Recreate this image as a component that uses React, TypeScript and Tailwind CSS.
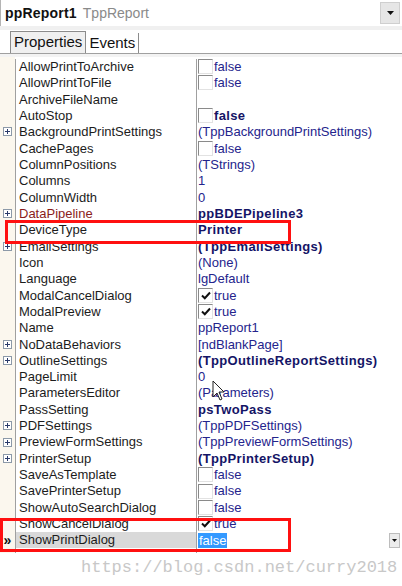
import React from "react"

type Row = {
  name: string
  value?: string
  check?: boolean
  bold?: boolean
  expand?: boolean
  red?: boolean
}

const rows: Row[] = [
  { name: "AllowPrintToArchive", value: "false", check: false },
  { name: "AllowPrintToFile", value: "false", check: false },
  { name: "ArchiveFileName", value: "" },
  { name: "AutoStop", value: "false", check: false, bold: true },
  { name: "BackgroundPrintSettings", value: "(TppBackgroundPrintSettings)", expand: true },
  { name: "CachePages", value: "false", check: false },
  { name: "ColumnPositions", value: "(TStrings)" },
  { name: "Columns", value: "1" },
  { name: "ColumnWidth", value: "0" },
  { name: "DataPipeline", value: "ppBDEPipeline3", bold: true, expand: true, red: true },
  { name: "DeviceType", value: "Printer", bold: true },
  { name: "EmailSettings", value: "(TppEmailSettings)", bold: true, expand: true },
  { name: "Icon", value: "(None)" },
  { name: "Language", value: "lgDefault" },
  { name: "ModalCancelDialog", value: "true", check: true },
  { name: "ModalPreview", value: "true", check: true },
  { name: "Name", value: "ppReport1" },
  { name: "NoDataBehaviors", value: "[ndBlankPage]", expand: true },
  { name: "OutlineSettings", value: "(TppOutlineReportSettings)", bold: true, expand: true },
  { name: "PageLimit", value: "0" },
  { name: "ParametersEditor", value: "(Parameters)" },
  { name: "PassSetting", value: "psTwoPass", bold: true },
  { name: "PDFSettings", value: "(TppPDFSettings)", expand: true },
  { name: "PreviewFormSettings", value: "(TppPreviewFormSettings)", expand: true },
  { name: "PrinterSetup", value: "(TppPrinterSetup)", bold: true, expand: true },
  { name: "SaveAsTemplate", value: "false", check: false },
  { name: "SavePrinterSetup", value: "false", check: false },
  { name: "ShowAutoSearchDialog", value: "false", check: false },
  { name: "ShowCancelDialog", value: "true", check: true },
]

const font = { fontFamily: "Tahoma, 'Liberation Sans', sans-serif" }

function CheckBox({ checked }: { checked: boolean }) {
  return (
    <span className="mr-[1px] inline-flex h-[15px] w-[15px] shrink-0 items-center justify-center border-t border-l border-b border-r border-t-[#8a8a8a] border-l-[#8a8a8a] border-b-[#e2e2e2] border-r-[#e2e2e2] bg-white">
      {checked ? (
        <svg width="10" height="9" viewBox="0 0 10 9">
          <path d="M1 4.5 L3.8 7.2 L9 1.5" fill="none" stroke="#111" strokeWidth="2" />
        </svg>
      ) : null}
    </span>
  )
}

function Expander() {
  return (
    <span className="flex h-[9px] w-[9px] items-center justify-center border border-[#8c99a8] bg-white">
      <svg width="7" height="7" viewBox="0 0 7 7">
        <path d="M1 3.5 H6 M3.5 1 V6" stroke="#2a3a6a" strokeWidth="1" />
      </svg>
    </span>
  )
}

function PropRow({ row }: { row: Row }) {
  return (
    <div className="flex h-[16.33px] items-center">
      <div className="flex h-full w-[15px] items-center justify-center">{row.expand ? <Expander /> : null}</div>
      <div
        className={`flex h-full w-[181px] items-center border-l border-[#a0a0a0] pl-[3px] text-[13px] ${
          row.red ? "text-[#8a1c1c]" : "text-[#1c1c1c]"
        }`}
      >
        {row.name}
      </div>
      <div className="flex h-full flex-1 items-center border-l border-[#a0a0a0] pl-[1px]">
        {row.check !== undefined ? <CheckBox checked={row.check} /> : null}
        <span
          className={`text-[13px] ${row.bold ? "font-bold tracking-[0.35px] text-[#141466]" : "text-[#24248c]"}`}
        >
          {row.value}
        </span>
      </div>
    </div>
  )
}

export default function App() {
  return (
    <div className="relative h-[586px] w-[402px] overflow-hidden bg-white" style={font}>
      {/* component selector */}
      <div className="flex h-[26px] items-center border-l border-[#b4b4b4] bg-white pl-[4px]">
        <span className="text-[14px] font-bold tracking-[0.2px] text-[#111]">ppReport1</span>
        <span className="ml-[6px] text-[14px] text-[#8a8a8a]">TppReport</span>
        <div className="ml-auto mr-[2px] flex h-[22px] w-[20px] items-center justify-center border border-[#cfcfcf] bg-[#e6e6e6]">
          <svg width="7" height="4" viewBox="0 0 7 4">
            <path d="M0 0 H7 L3.5 4 Z" fill="#111" />
          </svg>
        </div>
      </div>

      {/* tabs */}
      <div className="h-[4px] bg-[#f0f0f0]" />
      <div className="flex h-[24px] items-end border-b border-[#a0a0a0] bg-white pl-[10px]">
        <div className="flex h-[22px] items-center border border-b-0 border-[#8c8c8c] bg-[#f0f0f0] px-[3px] text-[15px] text-[#111]">
          Properties
        </div>
        <div className="flex h-[20px] items-center border-r border-[#8c8c8c] px-[3px] text-[15px] text-[#111]">Events</div>
      </div>
      <div className="h-[3px] bg-[#f3f3f3]" />

      {/* grid */}
      <div className="flex flex-col bg-[linear-gradient(to_right,#fbf7ee_15px,white_15px)] pt-[1.5px]">
        {rows.map((row) => (
          <PropRow key={row.name} row={row} />
        ))}
        <div className="flex h-[16.33px] items-center">
          <div className="flex h-full w-[15px] items-center justify-center text-[14px] font-bold leading-none text-[#111]">»</div>
          <div className="flex h-full w-[181px] items-center border-l border-[#a0a0a0] bg-[#d9d9d9] pl-[3px] text-[13px] text-[#1c1c1c]">
            ShowPrintDialog
          </div>
          <div className="flex h-full flex-1 items-center border-l border-[#a0a0a0] pl-[1px]">
            <span className="bg-[#3399ff] px-[1px] text-[13px] leading-[15px] text-white">false</span>
            <div className="ml-auto mr-[2px] flex h-[15px] w-[11px] items-center justify-center border border-[#bdbdbd] bg-[#ececec]">
              <svg width="5" height="3" viewBox="0 0 5 3">
                <path d="M0 0 H5 L2.5 3 Z" fill="#111" />
              </svg>
            </div>
          </div>
        </div>
        <div className="flex h-[5px] overflow-hidden">
          <div className="w-[15px]" />
          <div className="w-[181px] border-l border-[#a0a0a0]" />
          <div className="flex-1 border-l border-[#a0a0a0]" />
        </div>
      </div>

      {/* watermark */}
      <div
        className="absolute left-[81px] top-[555px] text-[17px] text-[#c8c8c8]"
        style={{ fontFamily: "'Liberation Mono', monospace" }}
      >
        https://blog.csdn.net/curry2018
      </div>

      {/* highlight boxes */}
      <div className="absolute left-[5px] top-[220px] h-[24px] w-[286px] border-[3px] border-[#ff1010]" />
      <div className="absolute left-0 top-[518px] h-[34px] w-[291px] border-[3px] border-[#ff1010]" />

      {/* mouse cursor */}
      <svg className="absolute left-[212px] top-[380px]" width="14" height="22" viewBox="0 0 14 22">
        <path d="M1 1 V17 L5 13 L8 20 L10 19 L7 12 H12 Z" fill="white" stroke="#222" strokeWidth="1" />
      </svg>
    </div>
  )
}
